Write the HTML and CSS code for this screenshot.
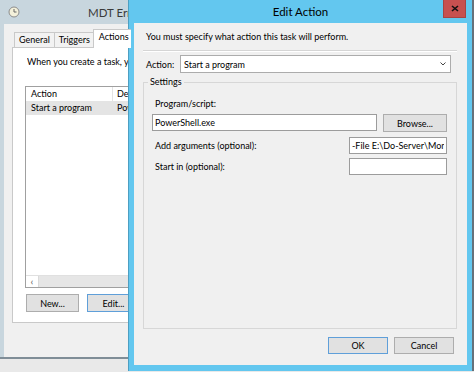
FILE: index.html
```html
<!DOCTYPE html>
<html lang="en">
<head>
  <meta charset="UTF-8">
  <title>Edit Action</title>
  <link rel="stylesheet" href="styles.css">
</head>
<body>
  <div class="desktop">

    <!-- Task properties window (behind) -->
    <div class="window task-window">
      <div class="task-title">
        <svg class="clock" width="12" height="12" viewBox="0 0 12 12">
          <circle cx="6" cy="6" r="5" fill="#f3f0da" stroke="#8c8c8c"/>
          <path d="M6 3v3h2.5" fill="none" stroke="#666"/>
        </svg>
        <span>MDT Errors Monitor</span>
      </div>
      <div class="task-body">
        <div class="tabs">
          <span class="tab">General</span>
          <span class="tab">Triggers</span>
          <span class="tab current">Actions</span>
        </div>
        <div class="tab-panel">
          <p class="hint">When you create a task, you must specify the action.</p>
          <div class="listbox">
            <div class="list-row list-head"><span class="col-action">Action</span><span class="col-details">Details</span></div>
            <div class="list-row selected"><span class="col-action">Start a program</span><span class="col-details">PowerShell.exe</span></div>
            <div class="list-space"></div>
            <div class="hscroll"><span class="scroll-btn">&lsaquo;</span></div>
          </div>
          <div class="list-buttons">
            <button class="btn new">New...</button>
            <button class="btn default edit">Edit...</button>
          </div>
        </div>
      </div>
    </div>

    <!-- Edit Action dialog -->
    <div class="window dialog">
      <div class="dialog-title">
        Edit Action
        <span class="close">
          <svg width="8" height="7" viewBox="0 0 8 7">
            <path d="M1 1L7 6M7 1L1 6" stroke="#111" stroke-width="1.6"/>
          </svg>
        </span>
      </div>
      <div class="dialog-body">
        <p class="intro">You must specify what action this task will perform.</p>
        <div class="separator"></div>
        <div class="action-row">
          <label>Action:</label>
          <div class="combo">
            <span>Start a program</span>
            <svg class="chevron" width="6" height="4" viewBox="0 0 6 4">
              <path d="M0.5 0.5L3 3L5.5 0.5" fill="none" stroke="#444"/>
            </svg>
          </div>
        </div>
        <fieldset class="settings">
          <legend>Settings</legend>
          <div class="field-label">Program/script:</div>
          <div class="program-row">
            <input class="textbox program" type="text" value="PowerShell.exe">
            <button class="btn browse">Browse...</button>
          </div>
          <div class="option-row">
            <span class="field-label">Add arguments (optional):</span>
            <input class="textbox short" type="text" value="-File E:\Do-Server\Monitor.ps1">
          </div>
          <div class="option-row">
            <span class="field-label">Start in (optional):</span>
            <input class="textbox short" type="text" value="">
          </div>
        </fieldset>
        <div class="dialog-buttons">
          <button class="btn default">OK</button>
          <button class="btn">Cancel</button>
        </div>
      </div>
    </div>

  </div>
</body>
</html>
```

FILE: styles.css
```css
* {
  box-sizing: border-box;
}

body {
  margin: 0;
  font-family: 'Lato', 'Segoe UI', sans-serif;
  font-size: 9px;
  color: #000;
  background: #e9e9e9;
}

p {
  margin: 0;
}

.desktop {
  position: relative;
  width: 474px;
  height: 372px;
  overflow: hidden;
}

.window {
  position: absolute;
  top: 0;
}

/* back window, mostly hidden behind the dialog */

.task-window {
  left: 0;
  width: 131px;
  height: 359px;
  overflow: hidden;
  background: #c8d6de;
  border-bottom: 2px solid #7f8d97;
  padding-left: 4px;
  display: flex;
  flex-direction: column;
  white-space: nowrap;
}

.task-title {
  height: 24px;
  display: flex;
  align-items: center;
  padding-left: 4px;
  font-size: 11.5px;
  color: #3a3a3a;
  overflow: hidden;
}

.task-title svg {
  flex-shrink: 0;
}

.task-title span {
  margin-left: 68px;
  overflow: hidden;
}

.task-body {
  flex: 1;
  background: #f0f0f0;
  padding-left: 8px;
  width: 300px;
}

.tabs {
  display: flex;
  align-items: flex-end;
  height: 19px;
  margin-top: 5px;
  padding-left: 2px;
}

.tab {
  height: 16px;
  line-height: 14px;
  padding: 0 4px;
  border: 1px solid #c9c9c9;
  border-bottom: none;
  background: #f2f2f2;
  margin-right: -1px;
}

.tab.current {
  position: relative;
  z-index: 1;
  height: 19px;
  margin: 0 -1px;
  padding: 0 5px;
  background: #fff;
}

.tab-panel {
  position: relative;
  margin-top: -1px;
  height: 276px;
  background: #fff;
  border: 1px solid #c9c9c9;
  padding: 0 12px;
}

.hint {
  margin: 8px 0 0 2px;
  line-height: 12px;
  width: 102px;
  overflow: hidden;
}

.listbox {
  margin-top: 18px;
  width: 300px;
  height: 202px;
  border: 1px solid #a0a0a0;
  display: flex;
  flex-direction: column;
}

.list-row {
  display: flex;
  height: 14px;
  line-height: 14px;
}

.col-action {
  width: 87px;
  padding-left: 5px;
}

.list-head .col-action {
  border-right: 1px solid #e3e3e3;
}

.col-details {
  padding-left: 4px;
  width: 16px;
  overflow: hidden;
}

.list-row.selected {
  background: #e4e4e4;
}

.list-space {
  flex: 1;
}

.hscroll {
  height: 12px;
  background: #e6e6e6;
  border-top: 1px solid #e0e0e0;
  display: flex;
}

.scroll-btn {
  width: 13px;
  background: #fff;
  border-right: 1px solid #dadada;
  text-align: center;
  line-height: 10px;
  font-size: 10px;
  color: #555;
}

.list-buttons {
  display: flex;
  gap: 8px;
  margin: 6px 0 0 1px;
}

.list-buttons .btn {
  height: 18px;
  width: 53px;
}

/* dialog */

.dialog {
  left: 129px;
  width: 343px;
  height: 371px;
  background: #63c7ef;
  padding: 0 5px 6px;
  box-shadow: -1px 0 0 #4d9fc2, 2px 0 0 #66717a;
  display: flex;
  flex-direction: column;
}

.dialog-title {
  position: relative;
  height: 23px;
  line-height: 23px;
  text-align: center;
  font-size: 11.5px;
}

.close {
  position: absolute;
  top: 0;
  right: 1px;
  width: 23px;
  height: 18px;
  background: #c75050;
  border: 1px solid #a84343;
  border-top: none;
  display: flex;
  align-items: center;
  justify-content: center;
}

.dialog-body {
  flex: 1;
  background: #f0f0f0;
  display: flex;
  flex-direction: column;
}

.intro {
  margin: 8px 0 0 12px;
  line-height: 12px;
}

.separator {
  margin: 7px 10px 0 9px;
  height: 2px;
  border-top: 1px solid #d5d5d5;
  border-bottom: 1px solid #fff;
}

.action-row {
  display: flex;
  align-items: center;
  margin-top: 3px;
  padding-left: 12px;
}

.action-row label {
  width: 34px;
}

.combo {
  width: 271px;
  height: 18px;
  background: #fff;
  border: 1px solid #acacac;
  display: flex;
  align-items: center;
  padding: 0 4px 0 3px;
}

.chevron {
  margin-left: auto;
}

.settings {
  flex: 1;
  min-height: 0;
  margin: 3px 10px 0 9px;
  padding: 0 9px 0 8px;
  border: 1px solid #d7d7d7;
}

.settings legend {
  padding: 0 2px;
  margin-left: -4px;
  line-height: 12px;
}

.field-label {
  line-height: 12px;
  padding-left: 3px;
}

.settings > .field-label {
  margin-top: 10px;
}

.program-row {
  display: flex;
  gap: 6px;
  margin-top: 4px;
}

.textbox {
  height: 17px;
  border: 1px solid #9c9c9c;
  background: #fff;
  padding: 0 2px;
  font: inherit;
  color: #000;
  outline: none;
}

.program {
  width: 225px;
}

.option-row {
  display: flex;
  justify-content: space-between;
  align-items: center;
  margin-top: 5px;
}

.option-row + .option-row {
  margin-top: 4px;
}

.short {
  width: 98px;
}

.btn {
  height: 17px;
  width: 60px;
  padding: 0;
  font: inherit;
  color: #000;
  background: #e1e1e1;
  border: 1px solid #adadad;
}

.btn.default {
  border-color: #5f9fd9;
}

.browse {
  width: 64px;
  height: 18px;
}

.dialog-buttons {
  display: flex;
  justify-content: flex-end;
  gap: 6px;
  margin: 8px 0 11px;
  padding-right: 13px;
}
```
